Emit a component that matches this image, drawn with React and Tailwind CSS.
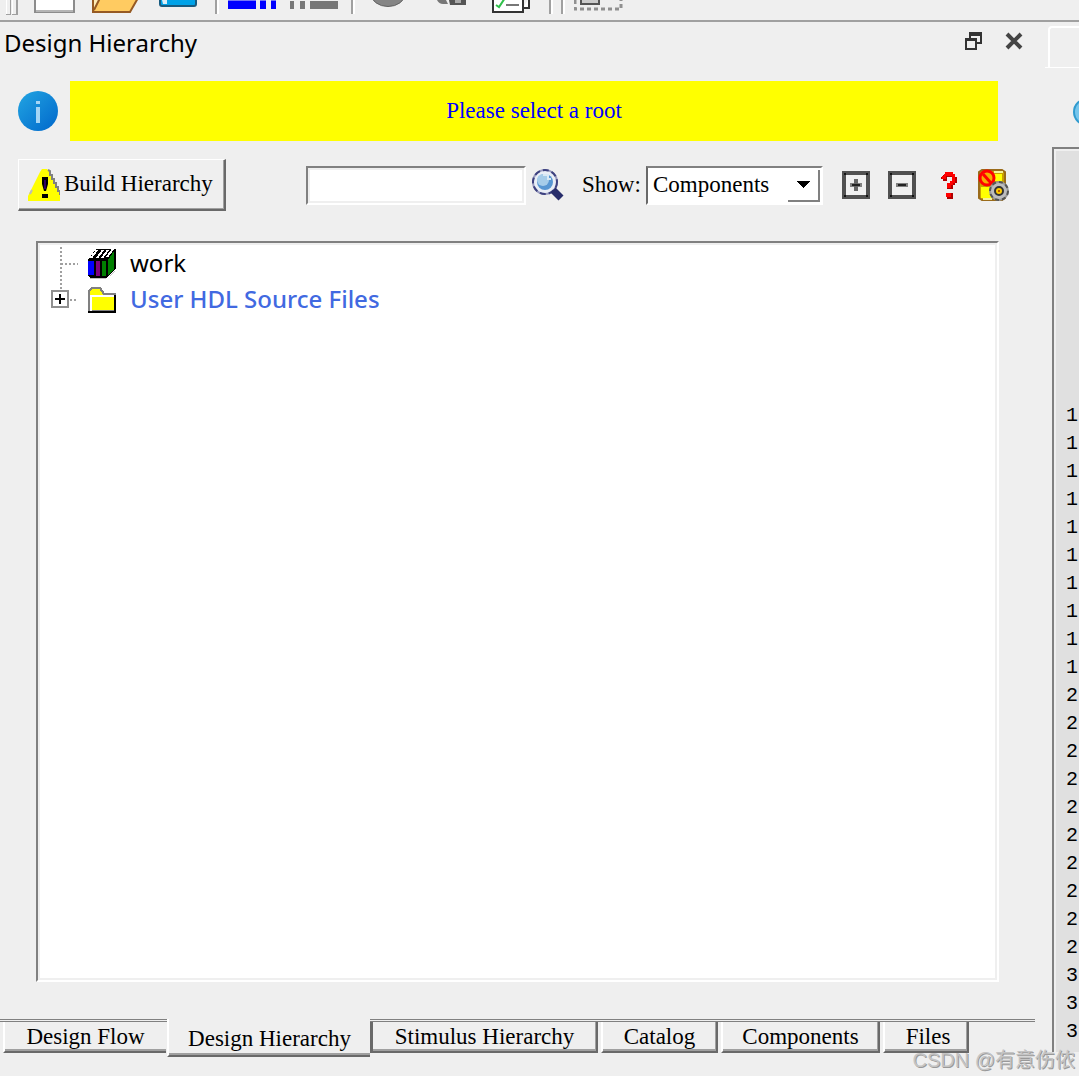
import React from "react";

const serif = "font-['Liberation_Serif',serif]";

function Separator({ className = "" }) {
  return <div className={`h-3.5 w-1 border-l-2 border-[#a0a0a0] border-r-2 border-r-white ${className}`} />;
}

function MainToolbar() {
  return (
    <header className="flex h-[22px] items-start overflow-hidden border-b-2 border-[#a0a0a0] [&>*]:shrink-0">
      <svg className="ml-1.5" width="12" height="20" shapeRendering="crispEdges" aria-hidden="true">
        <path d="M0 0h1v14H0zM6 0h1v14H6z" fill="#fff" />
        <path d="M4 0h1v15H0v-1h4zM10 0h2v15H6v-1h4z" fill="#a0a0a0" />
      </svg>
      <svg className="ml-4" width="42" height="20" shapeRendering="crispEdges" aria-hidden="true">
        <path d="M0 0h41v13H0z" fill="#8c8c8c" />
        <path d="M2 0h37v10H2z" fill="#fff" />
        <path d="M2 10h37v2H2z" fill="#b4b4b4" />
      </svg>
      <svg className="ml-4" width="48" height="20" aria-hidden="true">
        <path d="M8-2 1 12h37l8-14" fill="#ffcb61" />
        <path d="M0 0h7L3 8v2H0z" fill="#ffedb5" />
        <path d="M1 0v12h37l8-14M2 10l6-12" fill="none" stroke="#965a23" strokeWidth="2" />
      </svg>
      <svg className="ml-[19px]" width="38" height="20" aria-hidden="true">
        <path d="M1-2v6q0 2 2 2h32q2 0 2-2v-6" fill="#00a2e8" stroke="#175b80" strokeWidth="2" />
        <path d="M3 0h5v4H4z" fill="#d8edf7" />
      </svg>
      <Separator className="ml-[18px]" />
      <svg className="ml-[9px]" width="49" height="20" shapeRendering="crispEdges" aria-hidden="true">
        <path d="M0 1h28v8H0zM32 1h6v8h-6zM43 1h5v8h-5z" fill="#00f" />
        <path d="M0 0h28v1H0zM32 0h6v1h-6zM43 0h5v1h-5z" fill="#7777f5" />
      </svg>
      <svg className="ml-[13px]" width="49" height="20" shapeRendering="crispEdges" aria-hidden="true">
        <path d="M0 1h4v8H0zM10 1h5v8h-5zM20 1h28v8H20z" fill="#777" />
      </svg>
      <Separator className="ml-3" />
      <svg className="ml-4" width="34" height="20" aria-hidden="true">
        <ellipse cx="17" cy="-6" rx="17" ry="12.5" fill="#858585" stroke="#606060" />
      </svg>
      <svg className="ml-8" width="30" height="20" aria-hidden="true">
        <path d="M0 0h9l2 4H6Q2 4 0 0Z" fill="#777" />
        <path d="M12 0h17v5H13z" fill="#555" />
        <path d="M18 0h6v3h-6z" fill="#aaa" />
      </svg>
      <svg className="ml-[25px]" width="38" height="20" aria-hidden="true">
        <path d="M1-2v14h30V-2M31 8h6V-2" fill="#fff" stroke="#333" strokeWidth="2" />
        <path d="M4 5l3 2 6-9" fill="none" stroke="#2fc04a" strokeWidth="2" />
        <path d="M14 5h13" stroke="#777" strokeWidth="2" />
      </svg>
      <Separator className="ml-[19px]" />
      <Separator className="ml-2" />
      <svg className="ml-[9px]" width="50" height="20" aria-hidden="true">
        <path d="M1 0v9h46V0" fill="none" stroke="#909090" strokeWidth="3" strokeDasharray="4 3" />
        <path d="M7-2v6h18v-6" fill="#ccc" stroke="#555" strokeWidth="2" />
      </svg>
    </header>
  );
}

function InfoIcon() {
  return (
    <svg width="40" height="40" viewBox="0 0 40 40" className="shrink-0" aria-hidden="true">
      <defs>
        <linearGradient id="info" x1="0" y1="0" x2="1" y2="1">
          <stop offset="0" stopColor="#22a5e2" />
          <stop offset="1" stopColor="#0067cb" />
        </linearGradient>
      </defs>
      <circle cx="20" cy="20" r="20" fill="url(#info)" />
      <path d="M18 10h4v3h-4zM18 16h4v16h-4z" fill="#a5d5f5" />
    </svg>
  );
}

function WarningIcon() {
  return (
    <svg width="32" height="32" viewBox="0 0 32 32" className="shrink-0" aria-hidden="true">
      <path d="M14 0h5l2 2 11 23v7H0v-5L12 3z" fill="#ff0" />
      <path d="M20 1l2 1v4h2v4h2v4h2v4h2v4h2v4" fill="none" stroke="#808080" strokeWidth="2" />
      <path d="M2 25l2-4" stroke="#bbb" strokeWidth="2" />
      <path d="M14 8h6v7l-2 7h-2l-2-7zM14 25h6v4h-6z" fill="#000" />
      <path d="M16 11h2v9h-2z" fill="#300060" />
    </svg>
  );
}

function SearchIcon() {
  return (
    <svg width="32" height="32" viewBox="0 0 32 32" className="shrink-0" aria-hidden="true">
      <circle cx="13" cy="13" r="12" fill="#e9eef6" stroke="#9a9cc0" strokeWidth="2" />
      <circle cx="13" cy="13" r="12" fill="none" stroke="#3d417f" strokeWidth="2" strokeDasharray="6 3" />
      <circle cx="13" cy="13" r="8" fill="#5796d2" />
      <circle cx="11" cy="11" r="6" fill="#a5cce9" />
      <path d="M11 6h5v4h3" fill="none" stroke="#d9e9f5" strokeWidth="2" />
      <path d="M21 21l8 8" stroke="#272c6b" strokeWidth="7" />
    </svg>
  );
}

function BoxIcon({ plus }) {
  return (
    <svg width="28" height="28" viewBox="0 0 28 28" shapeRendering="crispEdges" aria-hidden="true">
      <path d="M2 2h24v24H2z" fill="#efefef" stroke="#505050" strokeWidth="4" />
      <path d="M2 2h2v2H2zM24 2h2v2h-2zM2 24h2v2H2zM24 24h2v2h-2z" fill="#111" />
      <path d="M8 12h12v4H8z" fill="#808080" />
      {plus && <path d="M12 8h4v12h-4z" fill="#666" />}
      <path d="M10 13h8v2h-8z" fill="#222" />
    </svg>
  );
}

function HelpIcon() {
  return (
    <svg width="16" height="28" viewBox="0 0 16 28" shapeRendering="crispEdges" aria-hidden="true">
      <path d="M4 2h8v2h2v2h2v6h-2v2h-2v4H6v-6h4v-2h2V6H6v4H2V8H0V6h2V4h2zM6 22h6v6H6z" fill="#b00000" />
      <path d="M4 1h8v2h2v9h-2v2h-2v3H6v-5h3v-2h2V5H5v3H1V5h2V3h1zM5 22h5v4H5z" fill="#f00" />
    </svg>
  );
}

function DatabaseIcon() {
  return (
    <svg width="32" height="32" viewBox="0 0 32 32" aria-hidden="true">
      <path d="M1 3l3-2h20l3 2v26l-3 2H4l-3-2z" fill="#c9a000" stroke="#9a6b1a" strokeWidth="2" />
      <path d="M4 5h20v7H4zM3 18h11v11H3z" fill="#ff0" />
      <path d="M16 3h9M5 30h9" stroke="#f4f19a" strokeWidth="2" />
      <circle cx="9" cy="9" r="7" fill="#f4ae00" stroke="#f00" strokeWidth="3" />
      <path d="M5 5l8 9" stroke="#f00" strokeWidth="3" />
      <circle cx="21" cy="22" r="9" fill="#bdbdbd" stroke="#9a9a9a" strokeWidth="2" />
      <circle cx="21" cy="22" r="9" fill="none" stroke="#555" strokeWidth="2" strokeDasharray="4 3" />
      <circle cx="21" cy="22" r="4" fill="#fc0" stroke="#333" strokeWidth="2" />
      <circle cx="21" cy="22" r="1" fill="#a33b00" />
    </svg>
  );
}

function BooksIcon() {
  return (
    <svg width="28" height="30" viewBox="0 0 28 30" shapeRendering="crispEdges" aria-hidden="true">
      <path d="M0 11L8 0h20v20h-1l-8 9H2l-2-2z" fill="#000" />
      <path d="M0 12h6v14H0z" fill="#00f" />
      <path d="M8 12h4v15H8z" fill="#800080" />
      <path d="M14 12h4v15h-4z" fill="#008000" />
      <path d="M20 11l6-9v18l-6 6z" fill="#008000" />
      <path d="M3 9l6-8M9 9l6-8M14 9l6-8M19 8l6-8" stroke="#fff" strokeWidth="2" />
      <path d="M2 29h16M22 27l5-5" stroke="#c0c0c0" strokeWidth="1" />
    </svg>
  );
}

function FolderIcon() {
  return (
    <svg width="28" height="26" viewBox="0 0 28 26" shapeRendering="crispEdges" aria-hidden="true">
      <path d="M1 24V4l3-3h8l4 6h11v17z" fill="#ff0" stroke="#808080" strokeWidth="2" />
      <path d="M3 24V9h23" fill="none" stroke="#fff" strokeWidth="2" />
      <path d="M0 25h27V8" fill="none" stroke="#000" strokeWidth="2" />
    </svg>
  );
}

function Tree() {
  return (
    <ul
      role="tree"
      className="mr-9 ml-9 flex-1 border-2 border-t-[#808080] border-r-white border-b-white border-l-[#808080] bg-white pt-1 pl-3 font-['Noto_Sans',sans-serif] text-2xl leading-8 shadow-[inset_-2px_-2px_0_#efefef,inset_2px_2px_0_#efefef]"
    >
      <li role="treeitem" className="flex h-9 items-start">
        <svg width="28" height="36" className="mr-2.5" shapeRendering="crispEdges" aria-hidden="true">
          <path d="M11 0v36M11 17h17" fill="none" stroke="#a0a0a0" strokeWidth="2" strokeDasharray="2 2" />
        </svg>
        <div className="pt-0.5"><BooksIcon /></div>
        <span className="ml-3.5 text-black">work</span>
      </li>
      <li role="treeitem" aria-expanded="false" className="flex h-9 items-start">
        <button aria-label="Expand User HDL Source Files" className="mr-2.5">
          <svg width="28" height="36" shapeRendering="crispEdges" aria-hidden="true">
            <path d="M11 0v8M20 17h8" stroke="#a0a0a0" strokeWidth="2" strokeDasharray="2 2" />
            <path d="M2 8h16v16H2z" fill="#fff" stroke="#909090" strokeWidth="2" />
            <path d="M5 16h10M10 11v10" stroke="#000" strokeWidth="2" />
          </svg>
        </button>
        <div className="pt-1"><FolderIcon /></div>
        <span className="ml-3.5 font-medium text-[#4169e1]">User HDL Source Files</span>
      </li>
    </ul>
  );
}

function BottomTabs() {
  return (
    <div role="tablist" className={`mt-[37px] flex h-[57px] items-start text-[23px] leading-7 whitespace-nowrap ${serif}`}>
      <div className="flex h-[34px] w-[167px] border-t-3 border-double border-[#808080] pl-[3px]">
        <button role="tab" className="w-[163px] border-b-2 border-l-2 border-b-[#696969] border-l-white shadow-[inset_0_-2px_0_#a0a0a0]">Design Flow</button>
      </div>
      <button role="tab" aria-selected="true" className="h-[38px] w-[203px] border-b-2 border-l-2 border-b-[#696969] border-l-white pt-1 shadow-[inset_0_-2px_0_#a0a0a0]">Design Hierarchy</button>
      <div className="flex h-[34px] flex-1 gap-[3px] border-t-3 border-double border-[#808080]">
        <button role="tab" className="w-[228px] border-r-2 border-b-2 border-l-3 border-[#696969] shadow-[inset_-1px_-2px_0_#a0a0a0]">Stimulus Hierarchy</button>
        <button role="tab" className="w-[117px] border-r-2 border-b-2 border-l-2 border-[#696969] border-l-white shadow-[inset_-1px_-2px_0_#a0a0a0]">Catalog</button>
        <button role="tab" className="w-[159px] border-r-2 border-b-2 border-l-2 border-[#696969] border-l-white shadow-[inset_-1px_-2px_0_#a0a0a0]">Components</button>
        <button role="tab" className="w-[86px] border-r-2 border-b-2 border-l-2 border-[#696969] border-l-white pl-1 shadow-[inset_-1px_-2px_0_#a0a0a0]">Files</button>
      </div>
    </div>
  );
}

function HierarchyPanel() {
  return (
    <section className="flex min-w-0 flex-1 flex-col">
      <div className="flex h-[42px] items-center pr-3 pl-1">
        <h1 className="flex-1 font-['Noto_Sans',sans-serif] text-2xl">Design Hierarchy</h1>
        <button aria-label="Restore panel" className="mb-1">
          <svg width="18" height="18" viewBox="0 0 18 18" shapeRendering="crispEdges" aria-hidden="true">
            <path d="M5 8V2h11v9h-4" fill="none" stroke="#333" strokeWidth="2" />
            <path d="M4 0h13v4H4zM0 6h12v3H0z" fill="#333" />
            <path d="M1 7h10v10H1z" fill="none" stroke="#333" strokeWidth="2" />
          </svg>
        </button>
        <button aria-label="Close panel" className="mb-1 ml-[22px]">
          <svg width="18" height="18" viewBox="0 0 18 18" aria-hidden="true">
            <path d="M2 2l14 14M16 2L2 16" stroke="#444" strokeWidth="4" />
          </svg>
        </button>
      </div>
      <div className="mt-[17px] mr-[37px] ml-[18px] flex items-center gap-3">
        <InfoIcon />
        <p className={`flex h-[60px] flex-1 items-center justify-center bg-[#ff0] text-[23px] text-[#00f] ${serif}`}>Please select a root</p>
      </div>
      <div className={`mt-[18px] mr-[25px] mb-[30px] ml-[18px] flex h-[52px] items-center text-[23px] whitespace-nowrap ${serif}`}>
        <button className="flex h-[52px] w-[208px] items-center gap-1 border-t border-r-2 border-b-2 border-l border-t-white border-r-[#696969] border-b-[#696969] border-l-white pl-[9px] shadow-[inset_-1px_-1px_0_#a0a0a0]">
          <WarningIcon />
          Build Hierarchy
        </button>
        <input
          aria-label="Filter"
          className="ml-20 h-[39px] min-w-0 flex-1 border-2 border-t-[#808080] border-r-white border-b-white border-l-[#808080] bg-white px-2 shadow-[inset_0_0_0_2px_#efefef] outline-none"
        />
        <button aria-label="Search" className="ml-1.5"><SearchIcon /></button>
        <label htmlFor="show" className="ml-[18px] w-16">Show:</label>
        <div className="relative">
          <select id="show" defaultValue="Components" className="block h-[39px] w-[177px] appearance-none rounded-none border-2 border-t-[#808080] border-r-white border-b-white border-l-[#696969] bg-white pl-[5px] text-black outline-none">
            <option>Components</option>
          </select>
          <span className="pointer-events-none absolute top-1 right-[3px] flex h-8 w-8 items-center justify-center border-r-2 border-b-2 border-[#808080] bg-white">
            <svg width="14" height="7" shapeRendering="crispEdges" aria-hidden="true">
              <path d="M0 0h14L7 7z" />
            </svg>
          </span>
        </div>
        <button aria-label="Expand all" className="ml-[19px]"><BoxIcon plus /></button>
        <button aria-label="Collapse all" className="ml-[18px]"><BoxIcon /></button>
        <button aria-label="Help" className="ml-[25px]"><HelpIcon /></button>
        <button aria-label="Options" className="ml-[21px]"><DatabaseIcon /></button>
      </div>
      <Tree />
      <BottomTabs />
    </section>
  );
}

const lineDigits = [..."1111111111", ..."2222222222", ..."333"];

function EditorPanel() {
  return (
    <aside className="ml-2.5 flex w-[34px] shrink-0 flex-col overflow-hidden">
      <div className="mt-1 h-[42px] shrink-0 border-b border-white pl-[3px]">
        <div className="h-full rounded-tl border-t-2 border-l-2 border-white" />
      </div>
      <svg className="mt-[30px] ml-7 shrink-0" width="24" height="28" aria-hidden="true">
        <circle cx="14" cy="14" r="13" fill="#77c6ec" stroke="#309bcf" strokeWidth="2" />
      </svg>
      <div className="mt-[21px] mb-6 ml-[7px] flex-1 border-t-2 border-l-2 border-[#808080] bg-[#e0e0e0] pt-[253px] pl-3 font-['Liberation_Mono',monospace] text-xl leading-7 shadow-[inset_2px_2px_0_#efefef]">
        {lineDigits.map((digit, i) => (
          <div key={i}>{digit}</div>
        ))}
      </div>
    </aside>
  );
}

export default function App() {
  return (
    <main className="relative flex min-h-screen flex-col overflow-hidden bg-[#efefef] text-black">
      <MainToolbar />
      <div className="flex flex-1">
        <HierarchyPanel />
        <EditorPanel />
      </div>
      <p className="pointer-events-none absolute right-1 bottom-0.5 font-['Liberation_Sans','Noto_Sans_CJK_SC',sans-serif] text-xl text-[#c4c4c4] [text-shadow:1px_1px_0_#999]">CSDN @有意伤侬</p>
    </main>
  );
}
